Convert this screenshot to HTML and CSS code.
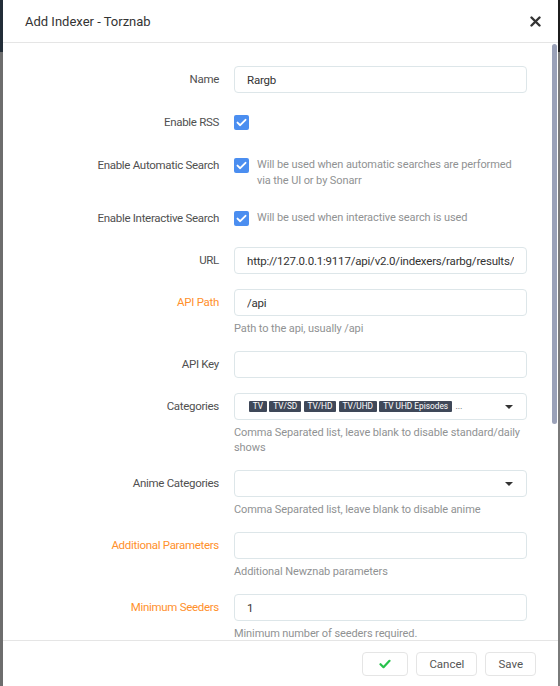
FILE: index.html
```html
<!DOCTYPE html>
<html>
<head>
<meta charset="utf-8">
<link rel="stylesheet" href="styles.css">
</head>
<body>
<div class="page">
  <div class="side"></div>
  <div class="modal">
    <div class="modal-header">
      <div class="title">Add Indexer - Torznab</div>
      <svg class="close" width="11" height="11" viewBox="0 0 11 11"><path d="M1.5 1.5L9.5 9.5M9.5 1.5L1.5 9.5" stroke="#333" stroke-width="2.4" stroke-linecap="round"/></svg>
    </div>
    <div class="modal-body">
      <div class="group">
        <div class="label">Name</div>
        <div class="control"><input class="input" value="Rargb" readonly></div>
      </div>
      <div class="group check-group">
        <div class="label">Enable RSS</div>
        <div class="control check-control"><span class="cb"><svg width="11" height="9" viewBox="0 0 11 9"><path d="M1.5 4.6L4.2 7.2L9.5 1.8" fill="none" stroke="#fff" stroke-width="1.9" stroke-linecap="round" stroke-linejoin="round"/></svg></span></div>
      </div>
      <div class="group check-group">
        <div class="label">Enable Automatic Search</div>
        <div class="control check-control"><span class="cb"><svg width="11" height="9" viewBox="0 0 11 9"><path d="M1.5 4.6L4.2 7.2L9.5 1.8" fill="none" stroke="#fff" stroke-width="1.9" stroke-linecap="round" stroke-linejoin="round"/></svg></span><span class="inline-help">Will be used when automatic searches are performed via the UI or by Sonarr</span></div>
      </div>
      <div class="group check-group">
        <div class="label">Enable Interactive Search</div>
        <div class="control check-control"><span class="cb"><svg width="11" height="9" viewBox="0 0 11 9"><path d="M1.5 4.6L4.2 7.2L9.5 1.8" fill="none" stroke="#fff" stroke-width="1.9" stroke-linecap="round" stroke-linejoin="round"/></svg></span><span class="inline-help">Will be used when interactive search is used</span></div>
      </div>
      <div class="group">
        <div class="label">URL</div>
        <div class="control"><input class="input" value="http://127.0.0.1:9117/api/v2.0/indexers/rarbg/results/torznab/" readonly></div>
      </div>
      <div class="group">
        <div class="label advanced">API Path</div>
        <div class="control"><input class="input" value="/api" readonly><div class="help">Path to the api, usually /api</div></div>
      </div>
      <div class="group">
        <div class="label">API Key</div>
        <div class="control"><input class="input" value="" readonly></div>
      </div>
      <div class="group">
        <div class="label">Categories</div>
        <div class="control">
          <div class="select">
            <div class="tags"><span class="tag">TV</span><span class="tag">TV/SD</span><span class="tag">TV/HD</span><span class="tag">TV/UHD</span><span class="tag">TV UHD Episodes</span><span class="more">...</span></div>
            <span class="caret"></span>
          </div>
          <div class="help">Comma Separated list, leave blank to disable standard/daily shows</div>
        </div>
      </div>
      <div class="group">
        <div class="label">Anime Categories</div>
        <div class="control">
          <div class="select"><div class="tags"></div><span class="caret"></span></div>
          <div class="help">Comma Separated list, leave blank to disable anime</div>
        </div>
      </div>
      <div class="group">
        <div class="label advanced">Additional Parameters</div>
        <div class="control"><input class="input" value="" readonly><div class="help">Additional Newznab parameters</div></div>
      </div>
      <div class="group">
        <div class="label advanced">Minimum Seeders</div>
        <div class="control"><input class="input" value="1" readonly><div class="help">Minimum number of seeders required.</div></div>
      </div>
      <div class="scroll-thumb"></div>
    </div>
    <div class="modal-footer">
      <button class="btn btn-test"><svg width="12" height="10" viewBox="0 0 12 10"><path d="M1.5 5.2L4.5 8.2L10.5 1.8" fill="none" stroke="#27c24c" stroke-width="2.2" stroke-linecap="round" stroke-linejoin="round"/></svg></button>
      <button class="btn">Cancel</button>
      <button class="btn">Save</button>
    </div>
  </div>
  <div class="side side-right"></div>
</div>
</body>
</html>
```

FILE: styles.css
```css
html, body {
  margin: 0;
  padding: 0;
}
body {
  width: 560px;
  height: 686px;
  overflow: hidden;
  background: linear-gradient(#222d38 0, #222d38 52px, #6d6d6d 52px);
  font-family: Roboto, "Liberation Sans", sans-serif;
}
.page {
  display: flex;
  height: 686px;
}
.side {
  width: 3px;
  flex: none;
}
.side-right {
  width: 2px;
  background: linear-gradient(#1c1c1c 0, #1c1c1c 52px, #7a7a7a 52px);
}
.modal {
  width: 555px;
  flex: none;
  background: #fff;
  display: flex;
  flex-direction: column;
  height: 686px;
}
.modal-header {
  height: 42px;
  border-bottom: 1px solid #e5e5e5;
  display: flex;
  align-items: center;
  justify-content: space-between;
  padding: 0 17px 0 22px;
  flex: none;
}
.title {
  font-size: 13px;
  color: #333;
}
.close {
  display: block;
}
.modal-body {
  position: relative;
  height: 574px;
  padding-top: 23px;
  overflow: hidden;
  flex: none;
}
.group {
  display: flex;
  align-items: flex-start;
  margin-bottom: 15px;
}
.label {
  width: 216px;
  margin-right: 15px;
  text-align: right;
  font-size: 11.5px;
  letter-spacing: -0.3px;
  line-height: 27px;
  color: #505050;
  flex: none;
}
.check-group .label {
  line-height: 28px;
}
.label.advanced {
  color: #ff902b;
}
.control {
  width: 293px;
  flex: none;
}
.input {
  display: block;
  box-sizing: border-box;
  width: 293px;
  height: 27px;
  border: 1px solid #dde6e9;
  border-radius: 4px;
  padding: 0 12px;
  font-family: Roboto, "Liberation Sans", sans-serif;
  font-size: 11.5px;
  letter-spacing: -0.2px;
  color: #333;
  background: #fff;
  outline: none;
}
.help {
  margin-top: 5px;
  font-size: 11px;
  letter-spacing: -0.1px;
  line-height: 15px;
  color: #909293;
}
.check-control {
  display: flex;
  align-items: flex-start;
  min-height: 28px;
}
.cb {
  width: 15px;
  height: 15px;
  margin-top: 6.5px;
  border-radius: 2px;
  background: #4b8ef0;
  display: flex;
  align-items: center;
  justify-content: center;
  flex: none;
}
.cb svg {
  display: block;
}
.inline-help {
  margin-left: 8px;
  padding-top: 6px;
  font-size: 11px;
  letter-spacing: -0.1px;
  line-height: 16px;
  color: #909293;
}
.select {
  box-sizing: border-box;
  width: 293px;
  height: 27px;
  border: 1px solid #dde6e9;
  border-radius: 4px;
  padding: 0 13px 0 14px;
  display: flex;
  align-items: center;
  justify-content: space-between;
}
.tags {
  display: flex;
  align-items: center;
  gap: 2.5px;
}
.tag {
  background: #3f4859;
  color: #fff;
  font-size: 8.3px;
  line-height: 11px;
  padding: 0 3.8px;
  border-radius: 1px;
}
.more {
  font-size: 9px;
  color: #555;
  margin-left: 1px;
  line-height: 11px;
}
.caret {
  width: 0;
  height: 0;
  border-left: 4px solid transparent;
  border-right: 4px solid transparent;
  border-top: 4px solid #333;
}
.scroll-thumb {
  position: absolute;
  right: 1px;
  top: 1px;
  width: 5px;
  height: 380px;
  border-radius: 3px;
  background: #9aa1b8;
}
.modal-footer {
  border-top: 1px solid #e5e5e5;
  height: 46px;
  box-sizing: border-box;
  display: flex;
  align-items: center;
  justify-content: flex-end;
  gap: 8px;
  padding: 0 22px 0 0;
  flex: none;
}
.btn {
  height: 24px;
  box-sizing: border-box;
  border: 1px solid #e5e5e5;
  border-radius: 4px;
  background: #fff;
  font-family: Roboto, "Liberation Sans", sans-serif;
  font-size: 11.5px;
  color: #555;
  padding: 0 12px;
  display: flex;
  align-items: center;
  justify-content: center;
}
.btn-test {
  width: 46px;
}
```
